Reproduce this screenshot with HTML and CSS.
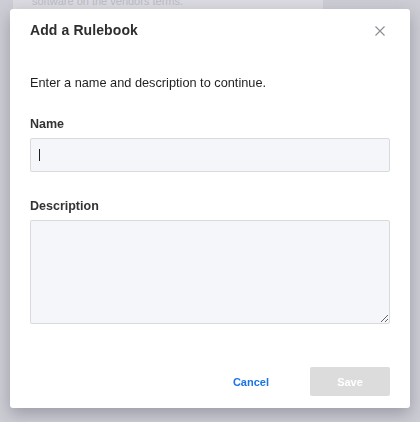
FILE: index.html
```html
<!DOCTYPE html>
<html lang="en">
<head>
<meta charset="utf-8">
<title>Add a Rulebook</title>
<link rel="stylesheet" href="styles.css">
</head>
<body>
<div class="page">
  <div class="page-card">
    <p class="page-text">software on the vendors terms.</p>
  </div>
</div>
<div class="modal" role="dialog" aria-labelledby="modal-title">
  <div class="modal-header">
    <h2 class="modal-title" id="modal-title">Add a Rulebook</h2>
    <button class="close-btn" aria-label="Close">
      <svg width="10" height="10" viewBox="0 0 10 10"><path d="M0.5 0.5 L9.5 9.5 M9.5 0.5 L0.5 9.5" stroke="#8c8c94" stroke-width="1.1" fill="none"/></svg>
    </button>
  </div>
  <p class="intro">Enter a name and description to continue.</p>
  <label class="field-label">Name</label>
  <div class="text-input"><span class="caret"></span></div>
  <label class="field-label desc-label">Description</label>
  <textarea class="text-area"></textarea>
  <div class="modal-footer">
    <button class="btn-cancel">Cancel</button>
    <button class="btn-save" disabled>Save</button>
  </div>
</div>
</body>
</html>
```

FILE: styles.css
```css
html, body {
  margin: 0;
  padding: 0;
  height: 100%;
  overflow: hidden;
}
body {
  background: #cdcdd5;
  font-family: "Liberation Sans", Arial, sans-serif;
}
.page {
  height: 422px;
}
.page-card {
  margin-left: 13px;
  width: 310px;
  height: 120px;
  background: linear-gradient(#dbdbe1, #cdcdd5);
  overflow: hidden;
}
.page-text {
  margin: -5px 0 0 19px;
  font-size: 11px;
  line-height: 13px;
  color: #bcbcc4;
}
.modal {
  position: fixed;
  left: 10px;
  top: 9px;
  width: 400px;
  height: 399px;
  box-sizing: border-box;
  background: #fff;
  border-radius: 3px;
  box-shadow: 0 6px 16px rgba(40, 40, 60, 0.3);
  padding: 0 20px;
  display: flex;
  flex-direction: column;
}
.modal-header {
  display: flex;
  align-items: center;
  justify-content: space-between;
  padding-top: 13px;
  height: 16px;
}
.modal-title {
  margin: 0;
  font-size: 14px;
  line-height: 16px;
  font-weight: bold;
  color: #2e2e30;
  letter-spacing: 0.1px;
}
.close-btn {
  border: 0;
  background: none;
  padding: 0;
  margin-right: 5px;
  width: 10px;
  height: 10px;
  display: flex;
  margin-top: 2px;
}
.intro {
  margin: 37px 0 0;
  font-size: 12.75px;
  line-height: 16px;
  color: #1f1f1f;
}
.field-label {
  display: block;
  margin-top: 25px;
  font-size: 12.5px;
  line-height: 16px;
  font-weight: bold;
  color: #333;
}
.desc-label {
  margin-top: 26px;
}
.text-input {
  margin-top: 6px;
  height: 34px;
  box-sizing: border-box;
  border: 1px solid #dadadd;
  border-radius: 2px;
  background: #f5f6fa;
  padding-left: 8px;
  display: flex;
  align-items: center;
}
.caret {
  width: 1px;
  height: 12px;
  background: #1e1e1e;
}
.text-area {
  margin-top: 6px;
  height: 104px;
  width: 100%;
  box-sizing: border-box;
  border: 1px solid #dadadd;
  border-radius: 2px;
  background: #f5f6fa;
  resize: vertical;
  font-family: inherit;
  display: block;
}
.modal-footer {
  margin-top: 43px;
  display: flex;
  justify-content: flex-end;
  align-items: center;
  gap: 25px;
}
.btn-cancel {
  border: 0;
  background: none;
  padding: 0 16px;
  height: 29px;
  font-family: inherit;
  font-size: 11px;
  font-weight: bold;
  color: #1a73e8;
}
.btn-save {
  border: 0;
  width: 80px;
  height: 29px;
  border-radius: 2px;
  background: #dcdcdc;
  color: #fff;
  font-family: inherit;
  font-size: 11px;
  font-weight: bold;
}
```
